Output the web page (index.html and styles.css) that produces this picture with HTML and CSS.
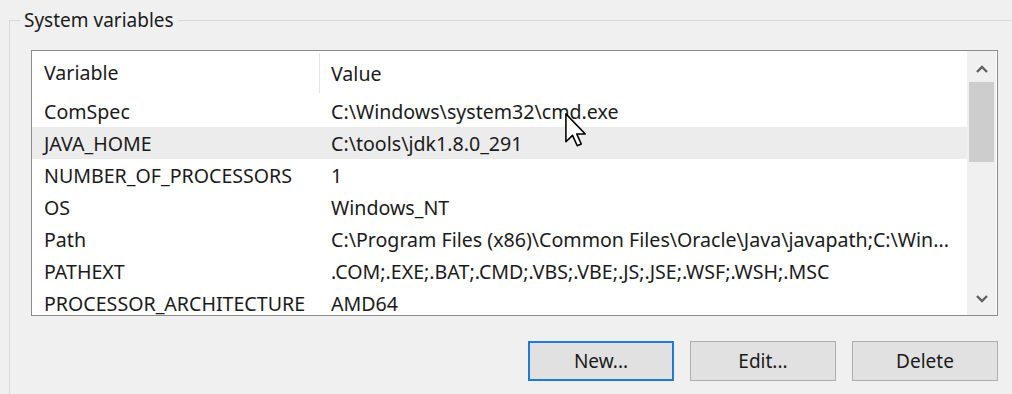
FILE: index.html
```html
<!DOCTYPE html>
<html lang="en">
<head>
<meta charset="utf-8"/>
<title>Environment Variables</title>
<link rel="stylesheet" href="styles.css">
</head>
<body>
<fieldset class="group">
  <legend>System variables</legend>
  <div class="listbox">
    <div class="list">
      <div class="row head">
        <div class="cell var">Variable</div>
        <div class="cell val">Value</div>
      </div>
      <div class="row"><div class="cell var">ComSpec</div><div class="cell val">C:\Windows\system32\cmd.exe</div></div>
      <div class="row hover"><div class="cell var">JAVA_HOME</div><div class="cell val">C:\tools\jdk1.8.0_291</div></div>
      <div class="row"><div class="cell var">NUMBER_OF_PROCESSORS</div><div class="cell val">1</div></div>
      <div class="row"><div class="cell var">OS</div><div class="cell val">Windows_NT</div></div>
      <div class="row"><div class="cell var">Path</div><div class="cell val">C:\Program Files (x86)\Common Files\Oracle\Java\javapath;C:\Win...</div></div>
      <div class="row"><div class="cell var">PATHEXT</div><div class="cell val">.COM;.EXE;.BAT;.CMD;.VBS;.VBE;.JS;.JSE;.WSF;.WSH;.MSC</div></div>
      <div class="row"><div class="cell var">PROCESSOR_ARCHITECTURE</div><div class="cell val">AMD64</div></div>
    </div>
    <div class="scrollbar">
      <svg class="arrow" width="14" height="10" viewBox="0 0 14 10"><path d="M2 8 L7 3 L12 8" fill="none" stroke="#606060" stroke-width="2.4"/></svg>
      <div class="track"><div class="thumb"></div></div>
      <svg class="arrow" width="14" height="10" viewBox="0 0 14 10"><path d="M2 2 L7 7 L12 2" fill="none" stroke="#606060" stroke-width="2.4"/></svg>
    </div>
  </div>
  <div class="buttons">
    <button class="btn default">New...</button>
    <button class="btn">Edit...</button>
    <button class="btn">Delete</button>
  </div>
</fieldset>
<svg class="cursor" width="21" height="34" viewBox="0 0 12 19.5">
  <path d="M0.5 0.5 L0.5 16.5 L4.3 12.8 L7 18.8 L9.3 17.8 L6.7 12 L11.6 12 Z" fill="#fff" stroke="#000" stroke-width="0.9" stroke-linejoin="round"/>
</svg>
</body>
</html>
```

FILE: styles.css
```css
body {
  margin: 0;
  padding-top: 8px;
  width: 1012px;
  height: 394px;
  overflow: hidden;
  background: #f0f0f0;
  font-family: 'Noto Sans', sans-serif;
  font-size: 19.6px;
  color: #1b1b1b;
  position: relative;
}

.group {
  margin: 0 0 0 9px;
  padding: 0 0 0 21px;
  border: 1px solid #d9d9d9;
  width: 1100px;
  height: 500px;
  box-sizing: border-box;
  min-inline-size: 0;
}
.group legend {
  margin-left: -11px;
  padding: 0 4px;
  line-height: 24px;
  font-size: 19px;
}

.listbox {
  margin-top: 18px;
  width: 967px;
  height: 266px;
  box-sizing: border-box;
  border: 1px solid #8b8b8b;
  background: #fff;
  display: flex;
  overflow: hidden;
}
.list {
  flex: 1;
  overflow: hidden;
}
.row {
  display: flex;
  height: 32px;
  align-items: center;
  white-space: nowrap;
}
.row.head {
  height: 44px;
}
.row.hover {
  background: #ececec;
}
.cell.var {
  width: 288px;
  padding-left: 12px;
  box-sizing: border-box;
}
.cell.val {
  padding-left: 11px;
}
.head .cell.var {
  height: 40px;
  line-height: 40px;
  border-right: 1px solid #e5e5e5;
}

.scrollbar {
  width: 29px;
  margin-right: 1px;
  background: #f0f0f0;
  display: flex;
  flex-direction: column;
  align-items: center;
}
.arrow {
  flex: none;
  margin: 13px 0 8px;
}
.scrollbar .arrow:last-child {
  margin: 6px 0 11px;
}
.track {
  flex: 1;
  width: 100%;
}
.thumb {
  height: 80px;
  margin: 0 2px;
  background: #cdcdcd;
}

.buttons {
  width: 967px;
  margin-top: 25px;
  display: flex;
  justify-content: flex-end;
  gap: 16px;
}
.btn {
  width: 146px;
  height: 40px;
  background: #e1e1e1;
  border: 1px solid #adadad;
  font-family: inherit;
  font-size: 19px;
  color: #1b1b1b;
  padding: 0;
}
.btn.default {
  border: 2px solid #1e7bd3;
}

.cursor {
  position: absolute;
  left: 565px;
  top: 113px;
}
```
